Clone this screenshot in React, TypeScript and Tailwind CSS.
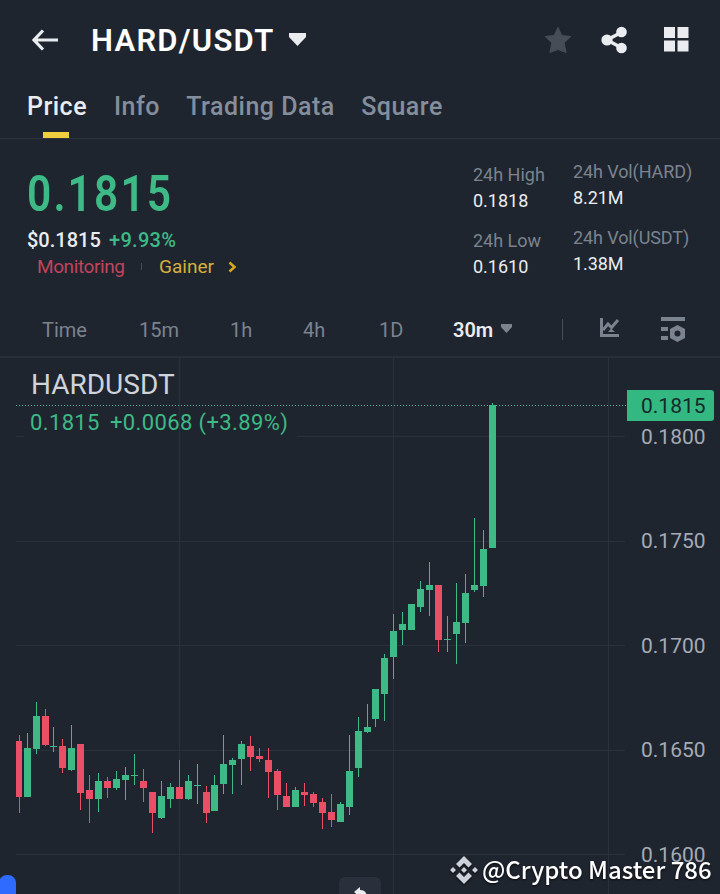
import { clsx } from "clsx";

// x, open/close top, body bottom, wick top, wick bottom, 1 = up / 0 = down
const candles = [
  [16, 741, 797, 735, 813, 0], [24, 748, 797, 733, 797, 1], [33, 716, 749, 702, 754, 1],
  [42, 716, 745, 709, 746, 0], [50, 746, 747, 727, 752, 1], [59, 746, 768, 739, 773, 0],
  [68, 748, 770, 725, 771, 1], [77, 744, 793, 744, 810, 0], [86, 790, 799, 775, 823, 0],
  [95, 781, 799, 773, 812, 1], [104, 781, 788, 777, 798, 0], [113, 779, 788, 771, 790, 1],
  [122, 775, 780, 767, 800, 1], [131, 775, 776, 754, 785, 1], [140, 781, 788, 769, 802, 0],
  [149, 792, 813, 792, 833, 0], [158, 796, 818, 781, 819, 1], [167, 787, 799, 783, 808, 1],
  [176, 787, 799, 760, 799, 0], [185, 781, 799, 775, 800, 1], [194, 785, 786, 764, 804, 1],
  [203, 792, 813, 786, 823, 0], [211, 785, 811, 775, 811, 1], [220, 764, 784, 735, 794, 1],
  [229, 760, 765, 758, 794, 1], [238, 744, 759, 741, 785, 1], [247, 746, 757, 736, 771, 0],
  [256, 756, 759, 748, 762, 0], [265, 760, 772, 748, 798, 0], [274, 771, 795, 769, 810, 0],
  [283, 796, 807, 783, 807, 0], [292, 790, 807, 787, 807, 1], [301, 792, 795, 783, 806, 0],
  [310, 794, 803, 792, 807, 0], [319, 802, 813, 798, 829, 0], [328, 812, 820, 794, 827, 0],
  [337, 804, 822, 802, 822, 1], [346, 771, 807, 735, 815, 1], [355, 731, 768, 717, 777, 1],
  [364, 727, 732, 704, 733, 1], [372, 689, 719, 689, 727, 1], [381, 658, 694, 654, 721, 1],
  [390, 631, 657, 614, 679, 1], [399, 624, 630, 612, 645, 1], [408, 604, 630, 604, 630, 1],
  [417, 589, 607, 581, 612, 1], [426, 585, 590, 562, 616, 1], [435, 585, 640, 585, 652, 0],
  [444, 639, 640, 616, 652, 1], [453, 622, 634, 583, 664, 1], [462, 593, 623, 574, 643, 1],
  [471, 585, 590, 518, 592, 1], [480, 549, 586, 530, 597, 1], [489, 405, 548, 403, 548, 1],
];

const tabs = [
  { label: "Price", width: "w-[60px]" },
  { label: "Info", width: "w-[48px]" },
  { label: "Trading Data", width: "w-[147px]" },
  { label: "Square", width: "w-[84px]" },
];

const axisPrices = ["0.1800", "0.1750", "0.1700", "0.1650", "0.1600"];

function Header() {
  return (
    <header className="flex h-[82px] items-center pb-[3px] pl-[31px] pr-[31px] text-[#eaecef]">
      <svg width="27" height="22" viewBox="0 0 27 22" fill="none" stroke="currentColor" strokeWidth="3.200">
        <path d="M12 1.500 3 11l9 9.500M3 11h24" />
      </svg>
      <h1 className="ml-[33px] w-[198px] whitespace-nowrap pt-[2px] text-[31px] leading-none font-semibold tracking-[1.250px] text-white">
        HARD/USDT
      </h1>
      <svg width="17" height="13" viewBox="0 0 17 13" fill="currentColor">
        <path d="M0 0h17v4L8.500 13 0 4z" />
      </svg>
      <svg className="ml-auto text-[#474d57]" width="28" height="28" viewBox="0 0 28 28" fill="currentColor" stroke="currentColor" strokeLinejoin="round">
        <path d="m14 1.500 3.800 8 9 1-6.700 6.300 2 9.700L14 23.500l-8.100 3 2-9.700-6.700-6.300 9-1z" />
      </svg>
      <svg className="ml-[29px]" width="27" height="28" viewBox="0 0 27 28" fill="currentColor">
        <path d="M21 6 6 14l15 8" fill="none" stroke="currentColor" strokeWidth="3.500" />
        <circle cx="20.500" cy="6" r="5.300" />
        <circle cx="6" cy="14" r="5.600" />
        <circle cx="20.500" cy="22" r="5.300" />
      </svg>
      <svg className="ml-[36px]" width="25" height="25" viewBox="0 0 25 25" fill="currentColor">
        <path d="M0 0h11v11H0zM13.500 0h11v11h-11zM0 13.500h11v11H0zM13.500 13.500h11v11h-11z" />
      </svg>
    </header>
  );
}

function Tabs() {
  return (
    <nav className="flex h-[57px] gap-[26px] border-b border-[#2d343f] pl-[27px] text-[25px] font-medium tracking-[0.5px]">
      {tabs.map((tab, i) => (
        <div key={tab.label} className={clsx("flex flex-col items-center justify-between", tab.width, i === 0 ? "text-[#eaecef]" : "text-[#848e9c]")}>
          <span className="whitespace-nowrap pt-[8px] leading-[34px]">{tab.label}</span>
          {i === 0 && <span className="mr-[2px] h-[6px] w-[26px] bg-[#f0cf3f]" />}
        </div>
      ))}
    </nav>
  );
}

function Stat({ label, value }: { label: string; value: string }) {
  return (
    <div className="h-[66px] whitespace-nowrap text-[18px] leading-[26px]">
      <div className="text-[#7b838f]">{label}</div>
      <div className="text-[#eaecef]">{value}</div>
    </div>
  );
}

function Summary() {
  return (
    <section className="flex h-[164px] pl-[27px]">
      <div className="w-[446px] pt-[30px]">
        <div className="h-[50px] origin-left scale-x-[0.85] text-[50px] leading-[50px] font-semibold tracking-[2.500px] text-[#3dba85]">0.1815</div>
        <div className="mt-[8px] flex gap-[9px] text-[20px] leading-[26px] font-medium">
          <span className="w-[73px] text-[#eaecef]">$0.1815</span>
          <span className="tracking-[0.3px] text-[#3dba85]">+9.93%</span>
        </div>
        <div className="flex items-center pl-[10px] text-[19px] leading-[27px]">
          <span className="w-[88px] tracking-[-0.4px] text-[#c0445c]">Monitoring</span>
          <span className="mx-[16px] h-[7px] w-px bg-[#474d57]" />
          <span className="ml-[1px] w-[55px] text-[#d8b03a]">Gainer</span>
          <svg className="ml-[14px] text-[#d8a820]" width="9" height="12" viewBox="0 0 9 12" fill="none" stroke="currentColor" strokeWidth="2.500">
            <path d="m1.500 1.500 5 4.500-5 4.500" />
          </svg>
        </div>
      </div>
      <div className="w-[100px] pt-[23px]">
        <Stat label="24h High" value="0.1818" />
        <Stat label="24h Low" value="0.1610" />
      </div>
      <div className="pt-[20px] tracking-[-0.1px]">
        <Stat label="24h Vol(HARD)" value="8.21M" />
        <Stat label="24h Vol(USDT)" value="1.38M" />
      </div>
    </section>
  );
}

function Intervals() {
  return (
    <div className="flex h-[55px] items-center border-b-2 border-[#272e38] pl-[42px] text-[20px] text-[#7b838f]">
      <span className="w-[97px]">Time</span>
      <span className="w-[91px]">15m</span>
      <span className="w-[73px]">1h</span>
      <span className="w-[76px]">4h</span>
      <span className="w-[74px]">1D</span>
      <span className="w-[48px] font-semibold text-[#eaecef]">30m</span>
      <svg className="mb-[3px]" width="11" height="9" viewBox="0 0 11 9" fill="currentColor">
        <path d="M0 0h11v3L5.500 9 0 3z" />
      </svg>
      <span className="ml-[50px] h-[21px] w-px bg-[#474d57]" />
      <svg className="mb-[3px] ml-[37px]" width="20" height="20" viewBox="0 0 20 20" fill="none" stroke="currentColor" strokeWidth="3">
        <path d="M1.500 0v17.500H19M3 12l5-6 3.500 3.500L18 2" />
        <path d="m8 14 3-3.500 4 3.500z" fill="currentColor" stroke="none" />
      </svg>
      <svg className="mb-px ml-[41px]" width="25" height="25" viewBox="0 0 25 25" fill="currentColor">
        <path d="M0 0h24v4H0zM0 10h7v4H0zM0 19h7v4H0z" />
        <path fillRule="evenodd" d="m16.500 8 7.500 4v9l-7.500 4L9 21v-9zm0 5.500a3 3 0 1 0 0 6 3 3 0 0 0 0-6z" />
      </svg>
    </div>
  );
}

function Chart() {
  return (
    <main className="relative flex h-[536px] overflow-hidden">
      <svg className="shrink-0" width="627" height="536" viewBox="0 358 627 536" shapeRendering="crispEdges">
        <g fill="#2a313b">
          <path d="M16 436h8v1h-8zM297 436h328v1H297z" />
          {[541, 645, 750, 854].map((y) => (
            <rect key={y} x="16" y={y} width="609" height="1" />
          ))}
          {[179, 393, 608].map((x) => (
            <rect key={x} x={x} y="358" width="1" height="536" />
          ))}
        </g>
        <path d="M16 405.500h611" stroke="#62b7a0" strokeDasharray="1 2" />
        {candles.map(([x, top, bottom, high, low, up]) => (
          <g key={x} fill={up ? "#3dba85" : "#ea4f66"}>
            <rect x={x + 3} y={high} width="1" height={low - high} />
            <rect x={x} y={top} width={x === 16 ? 6 : 7} height={bottom - top} />
          </g>
        ))}
      </svg>
      <div className="pl-[14px] pt-[27px] text-[21px] text-[#a5abb5]">
        {axisPrices.map((price) => (
          <div key={price} className="flex h-[104.500px] items-center leading-none">{price}</div>
        ))}
      </div>

      <div className="absolute left-[30px] top-[10px]">
        <div className="pl-px text-[28px] leading-[34px] text-[#cfd3da]">HARDUSDT</div>
        <div className="mt-[5px] flex text-[22px] leading-[32px] tracking-[0.370px] text-[#3dba85]">
          <span className="w-[80px]">0.1815</span>
          <span>+0.0068 (+3.89%)</span>
        </div>
      </div>
      <div className="absolute left-[627px] top-[32px] flex h-[31px] w-[87px] items-center rounded-r-[3px] bg-[#34b882] pl-[14px] pt-[2px] text-[21px] text-[#142a28]">
        0.1815
      </div>

      <div className="absolute -left-px top-[517px] h-[30px] w-[17px] rounded-t-[8px] bg-[#2f6bff]" />
      <div className="absolute left-[339px] top-[519px] h-[30px] w-[42px] rounded-[6px] bg-[#29303b]">
        <svg className="ml-[15px] mt-[10px]" width="14" height="12" viewBox="0 0 14 12" fill="#eaecef">
          <path d="M0 5 6 0v3c5 0 7 3 7 8-2-3-4-4-7-4v3z" />
        </svg>
      </div>

      <div className="absolute left-[450px] top-[498px] flex items-center text-white drop-shadow-[0_1px_1px_rgba(0,0,0,0.8)]">
        <svg width="28" height="28" viewBox="0 0 28 28" fill="#cdd1da">
          <path d="m14 0 8 8-3.500 3.500L14 7l-4.500 4.500L6 8zM14 28l8-8-3.500-3.500L14 21l-4.500-4.500L6 20zM3 11l3 3-3 3-3-3zM25 11l3 3-3 3-3-3zM14 11l3 3-3 3-3-3z" />
        </svg>
        <span className="-mt-[3px] ml-[4px] whitespace-nowrap font-['Noto_Sans_CJK_SC',sans-serif] text-[24px] leading-[28px] font-medium">@Crypto Master 786</span>
      </div>
    </main>
  );
}

export default function App() {
  return (
    <div className="h-[894px] w-[720px] overflow-hidden bg-[#1f252f] font-[Roboto,sans-serif]">
      <Header />
      <Tabs />
      <Summary />
      <Intervals />
      <Chart />
    </div>
  );
}
